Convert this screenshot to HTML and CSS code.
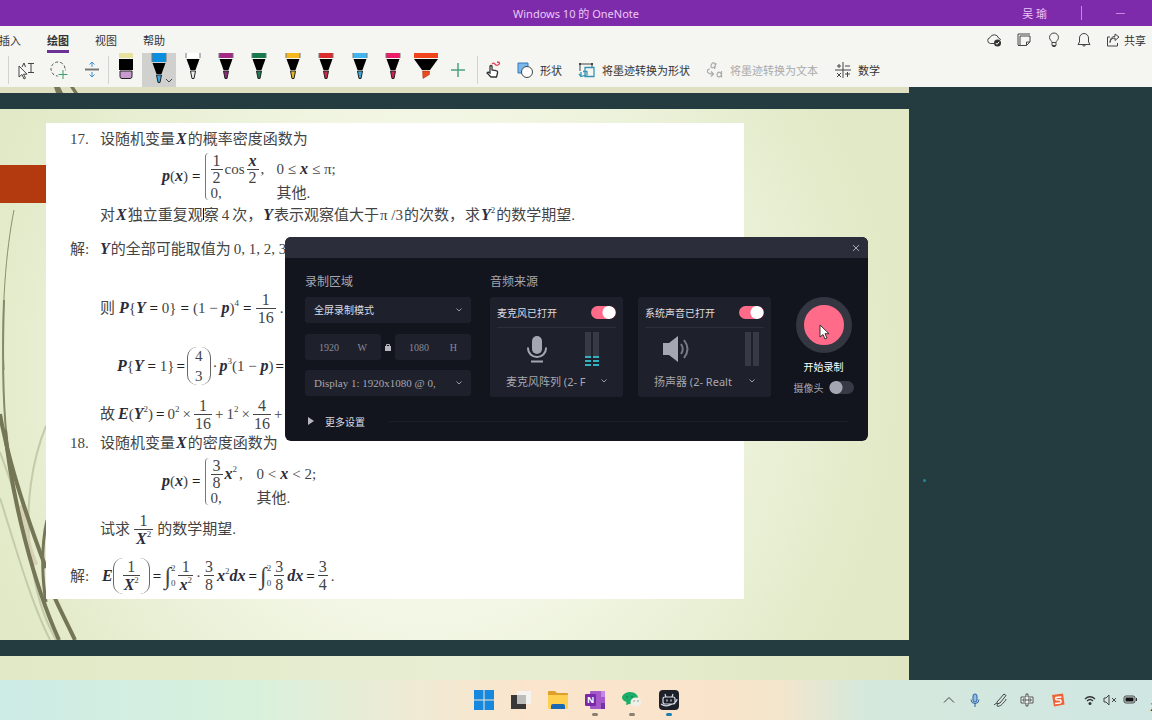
FILE: index.html
```html
<!DOCTYPE html>
<html lang="zh-CN">
<head>
  <meta charset="UTF-8" />
  <meta name="viewport" content="width=device-width, initial-scale=1.0"/>
  <title>Windows 10 的 OneNote</title>
  <link rel="stylesheet" href="styles.css">
</head>
<body>

  <!-- Title bar -->
  <header class="titlebar">
    <h1>Windows 10 的 OneNote</h1>
    <div class="titlebar-right">
      <span>吴 瑜</span>
      <i class="bar"></i>
      <button class="minimize" aria-label="最小化"></button>
    </div>
  </header>

  <!-- Ribbon -->
  <nav class="ribbon">
    <div class="tabs">
      <button>插入</button>
      <button class="active">绘图</button>
      <button>视图</button>
      <button>帮助</button>
      <div class="ribbon-right">
        <button aria-label="同步"><svg width="16" height="16" viewBox="0 0 16 16"><path d="M8 11.500H4.500a3 3 0 0 1-.5-5.900 4.500 4.500 0 0 1 8.500.4 2.500 2.500 0 0 1 2 2" class="line"/><circle cx="11.500" cy="11" r="3.500" fill="#333"/><path d="M9.800 11l1.200 1.300 2.200-2.500" fill="none" stroke="#fff"/></svg></button>
        <button aria-label="便笺"><svg width="16" height="16" viewBox="0 0 16 16"><path d="M2 13V2h12M4 4h10v6l-3.500 3.500H4zM14 10h-3.500v3.500M2 13.500h2" class="line"/></svg></button>
        <button aria-label="提示"><svg width="16" height="16" viewBox="0 0 16 16"><path d="M6 10.500C6 9 3.500 8 3.500 5.500a4.500 4.500 0 0 1 9 0C12.500 8 10 9 10 10.500zM6 10.500v3h4v-3M6.500 14.500h3" class="line"/></svg></button>
        <button aria-label="通知"><svg width="16" height="16" viewBox="0 0 16 16"><path d="M2 12.500h12L12.500 10V6a4.500 4.500 0 0 0-9 0v4zM6.500 13a1.600 1.600 0 0 0 3 0" class="line"/></svg></button>
        <button class="share"><svg width="14" height="14" viewBox="0 0 14 14"><path d="M4 4H1.500v9h10v-3M4 9.500c.5-3 2-4.500 5-4.500V7.500L13 4 9 1v2.300C6 3.500 4 5.500 4 9.500z" class="line"/></svg>共享</button>
      </div>
    </div>

    <div class="tools">
      <i class="sep"></i>
      <button class="tool" aria-label="选择"><svg width="20" height="20" viewBox="0 0 20 20"><path d="M3 6v11l3-2.500L8 19l1.500-.8-2-4H11z" fill="#fff" stroke="#444"/><path d="M6 7l2-4 1.500 4" class="line"/><path d="M12 3.500h6M12 12.500h6M15 3.500v9" class="line"/></svg></button>
      <button class="tool" aria-label="套索"><svg width="20" height="20" viewBox="0 0 20 20"><circle cx="9" cy="9" r="7" fill="none" stroke="#555" stroke-dasharray="3 2"/><path d="M14 9v11M8.500 14.500h11" stroke="#f5f5f2" stroke-width="4"/><path d="M14 10v9M9.500 14.500h9" stroke="#3a9d6b"/></svg></button>
      <button class="tool" aria-label="插入空间"><svg width="20" height="20" viewBox="0 0 20 20"><path d="M3 9.500h14" stroke="#777" stroke-width="2"/><path d="M10 7V2M7.500 4.500L10 2l2.500 2.500M10 12v5M7.500 14.500L10 17l2.500-2.500" fill="none" stroke="#3d8fd1"/></svg></button>
      <i class="sep"></i>
      <div class="pens" id="pens"></div>
      <button class="add" aria-label="添加笔"><svg width="16" height="16" viewBox="0 0 16 16"><path d="M8 1v14M1 8h14" stroke="#4ba37b" stroke-width="1.500"/></svg></button>
      <i class="sep"></i>
      <button class="tool touch" aria-label="触摸绘图"><svg width="18" height="18" viewBox="0 0 18 18"><path d="M6 12V5.500a1 1 0 0 1 2 0V9l4 .7q2 .4 1.500 2.300l-1 4H7L3 12q1-1.500 3 0z" fill="#fff" stroke="#333" stroke-width="1.300"/><path d="M8 3c3-3 3 3 6 1 3-2 1-3-1-3" fill="none" stroke="#e0435b" stroke-width="1.300"/></svg></button>
      <button class="labelled"><svg width="18" height="18" viewBox="0 0 18 18"><path d="M2 2h10v3L6 12H2z" fill="#79b8ea" stroke="#3479b8"/><circle cx="11" cy="11" r="5.500" fill="#fff" stroke="#444"/></svg>形状</button>
      <button class="labelled"><svg width="18" height="18" viewBox="0 0 18 18"><path d="M2 3h12M2 3v7M14 3v3" class="line"/><path d="M1 2h2v2H1zM13 2h2v2h-2z" fill="#444"/><path d="M7 6.500h9v9H7zM3 11v4M1 13l2 2.500L8 14M5 10.500h4v4" fill="none" stroke="#3594b5" stroke-width="1.300"/></svg>将墨迹转换为形状</button>
      <button class="labelled" disabled><svg width="18" height="18" viewBox="0 0 18 18"><path d="M10 2L8.500 8M9.500 4Q7-1 5 4.500 4.500 8.500 9 5.500M15.500 10v6.500M15.500 13.500Q13 9 11 13q0 5 4.500 1.500M4 8Q1 8 1.500 11q1 2 5.500 2M5 10.500L7.500 13 5 15.500" fill="none" stroke="#aaa" stroke-width="1.200"/></svg>将墨迹转换为文本</button>
      <button class="labelled"><svg width="18" height="18" viewBox="0 0 18 18"><path d="M9 1v16M1 9h16M5 3v4M3 5h4M11 5h5M3 12l4 4M7 12l-4 4M11 13h5M13.500 11v5" class="line"/></svg>数学</button>
    </div>
  </nav>

  <!-- Notebook page -->
  <main class="workspace">
    <div class="slides">
      <div class="slide slide-prev">
        <svg width="90" height="6" viewBox="0 0 90 6"><path d="M54 0h6l3 6h-7zM70 0h4l4 6h-4z" fill="#77775a"/></svg>
      </div>

      <article class="slide slide-main">
        <svg class="grass" width="110" height="531" viewBox="0 109 110 531">
          <g fill="none">
            <path d="M46 426C32 460 25 505 30 550S45 620 56 640M0 452C8 475 22 510 28 550M0 498C15 545 30 600 50 640" stroke="#c3cbaa" stroke-width="2"/>
            <path d="M22 505q4 40 14 60" stroke="#d6d0b4" stroke-width="5"/>
            <path d="M14 210C6 250 1 310 4 370" stroke="#8b8f6c" stroke-width="1"/>
            <path d="M4 300C2 360 3 430 12 475" stroke="#85886a" stroke-width="2"/>
            <path d="M5 430C12 500 34 585 59 640" stroke="#747655" stroke-width="4"/>
            <path d="M0 414C8 460 27 518 46 568M54 596C60 610 68 625 75 640" stroke="#747655" stroke-width="4"/>
            <path d="M47 520C40 550 43 585 46 602" stroke="#747655" stroke-width="3"/>
          </g>
        </svg>
        <div class="ribbon-mark"></div>

        <div class="paper">
          <p class="row row-title"><span class="no">17.</span>设随机变量<var>X</var>的概率密度函数为</p>
          <div class="row row-def">
            <span><var>p</var>(<var>x</var>)</span><b>=</b>
            <div class="cases">
              <div><span class="frac"><span>1</span><span>2</span></span>cos<span class="frac"><var>x</var><span>2</span></span>,</div>
              <div>0 ≤ <var>x</var> ≤ π;</div>
              <div>0,</div>
              <div>其他.</div>
            </div>
          </div>
          <p class="row row-line indent">对<var>X</var><span>独立重复观<i class="caret"></i>察</span><span class="num">4</span>次，<var>Y</var>表示观察值大于<span>π /3</span><span>的次数，</span>求<span><var>Y</var><sup>2</sup></span><span>的数学期望.</span></p>
          <p class="row row-line"><span class="no">解:</span><var>Y</var>的全部可能取值为<span class="num">0, 1, 2, 3, 4.</span><span class="hidden-part"><span>∫</span><span>|<sup>π</sup></span><span>∫</span></span></p>
          <p class="row row-p0 indent">则<span><var>P</var>{<var>Y</var> <b>=</b> 0}</span><b>=</b><span>(1 − <var>p</var>)<sup>4</sup></span><b>=</b><span class="frac"><span>1</span><span>16</span></span>.</p>
          <p class="row row-p1"><span><var>P</var>{<var>Y</var> <b>=</b> 1}</span><b>=</b><span class="round"><span>4</span><span>3</span></span>·<span><var>p</var><sup>3</sup>(1 − <var>p</var>)</span><b>=</b></p>
          <p class="row row-sum indent">故<span><var>E</var>(<var>Y</var><sup>2</sup>)</span><b>=</b><span>0<sup>2</sup></span>×<span class="frac"><span>1</span><span>16</span></span>+<span>1<sup>2</sup></span>×<span class="frac"><span>4</span><span>16</span></span>+</p>
          <p class="row row-second"><span class="no">18.</span>设随机变量<var>X</var>的密度函数为</p>
          <div class="row row-def">
            <span><var>p</var>(<var>x</var>)</span><b>=</b>
            <div class="cases narrow">
              <div><span class="frac"><span>3</span><span>8</span></span><span><var>x</var><sup>2</sup></span>,</div>
              <div>0 &lt; <var>x</var> &lt; 2;</div>
              <div>0,</div>
              <div>其他.</div>
            </div>
          </div>
          <p class="row row-ask indent">试求<span class="frac"><span>1</span><span><var>X</var><sup>2</sup></span></span>的数学期望.</p>
          <p class="row row-answer"><span class="no">解:</span><span class="group"><var>E</var><span class="round wide"><span class="frac"><span>1</span><span><var>X</var><sup>2</sup></span></span></span></span><b>=</b><span class="int">∫<span class="limits"><span>2</span><span>0</span></span></span><span class="frac"><span>1</span><span><var>x</var><sup>2</sup></span></span>·<span class="frac"><span>3</span><span>8</span></span><span><var>x</var><sup>2</sup><var>dx</var></span><b>=</b><span class="int">∫<span class="limits"><span>2</span><span>0</span></span></span><span class="frac"><span>3</span><span>8</span></span><var>dx</var><b>=</b><span class="frac"><span>3</span><span>4</span></span>.</p>
        </div>
      </article>

      <div class="slide slide-next"></div>
    </div>
    <div class="canvas"><i class="ink-dot"></i></div>
  </main>

  <!-- Screen recorder window -->
  <section class="recorder">
    <div class="recorder-head">
      <button aria-label="关闭"><svg width="8" height="8" viewBox="0 0 8 8"><path d="M1 1l6 6M7 1L1 7" stroke="#aaabb5" fill="none"/></svg></button>
    </div>
    <div class="recorder-body">
      <div class="area">
        <h2>录制区域</h2>
        <div class="field bright">
          <select aria-label="录制区域"><option>全屏录制模式</option></select>
          <svg class="chev" width="6" height="4" viewBox="0 0 6 4"><path d="M.5.5L3 3 5.500.5"/></svg>
        </div>
        <div class="size">
          <label class="field"><input type="text" value="1920">W</label>
          <svg width="6" height="8" viewBox="0 0 6 8"><path d="M0 3h6v5H0z" fill="#b5b6be"/><path d="M1.500 3V1.500h3V3" fill="none" stroke="#b5b6be"/></svg>
          <label class="field"><input type="text" value="1080">H</label>
        </div>
        <div class="field display">
          <select aria-label="显示器"><option>Display 1: 1920x1080 @ 0,</option></select>
          <svg class="chev" width="6" height="4" viewBox="0 0 6 4"><path d="M.5.5L3 3 5.500.5"/></svg>
        </div>
      </div>

      <div class="audio">
        <h2>音频来源</h2>
        <div class="cards">
          <div class="card">
            <label class="card-top">麦克风已打开<input type="checkbox" class="toggle" checked></label>
            <div class="card-mid">
              <svg width="22" height="28" viewBox="0 0 22 28"><rect x="6" y="1" width="10" height="18" rx="5" fill="#a4a6b2"/><path d="M2 12.500v1a9 8.500 0 0 0 18 0v-1M5 26.500h12" fill="none" stroke="#a4a6b2" stroke-width="2"/></svg>
              <div class="meter live"><i></i><i></i></div>
            </div>
            <div class="device">
              <select aria-label="麦克风"><option>麦克风阵列 (2- F</option></select>
              <svg class="chev" width="6" height="4" viewBox="0 0 6 4"><path d="M.5.5L3 3 5.500.5"/></svg>
            </div>
          </div>
          <div class="card">
            <label class="card-top">系统声音已打开<input type="checkbox" class="toggle" checked></label>
            <div class="card-mid">
              <svg width="28" height="28" viewBox="0 0 28 28"><path d="M1 8h6l9-7v26l-9-7H1z" fill="#a4a6b2"/><path d="M19 9q3.500 5 0 10M22 5q7 9 0 18" fill="none" stroke="#777985" stroke-width="2"/></svg>
              <div class="meter"><i></i><i></i></div>
            </div>
            <div class="device">
              <select aria-label="扬声器"><option>扬声器 (2- Realt</option></select>
              <svg class="chev" width="6" height="4" viewBox="0 0 6 4"><path d="M.5.5L3 3 5.500.5"/></svg>
            </div>
          </div>
        </div>
      </div>

      <div class="start">
        <button class="record" aria-label="开始录制">
          <svg class="pointer" width="11" height="16" viewBox="0 0 11 16"><path d="M1 1v12l3-2.500L6 15l2-1-2-4.300h4z" fill="#fff" stroke="#333"/></svg>
        </button>
        <strong>开始录制</strong>
        <label>摄像头<input type="checkbox" class="toggle"></label>
      </div>
    </div>
    <details class="more">
      <summary>更多设置</summary>
    </details>
  </section>

  <!-- Taskbar -->
  <footer class="taskbar">
    <div class="apps">
      <button aria-label="开始"><svg width="20" height="20" viewBox="0 0 20 20"><path d="M0 0h9.500v9.500H0zM10.500 0H20v9.500h-9.500zM0 10.500h9.500V20H0zM10.500 10.500H20V20h-9.500z" fill="#1689df"/></svg></button>
      <button aria-label="任务视图"><svg width="20" height="20" viewBox="0 0 20 20"><path d="M6 1h14v13H6z" fill="#f5f3f0"/><path d="M0 5h15v14H0z" fill="#383838"/><path d="M6 5h9v9H6z" fill="#bdbdbb"/></svg></button>
      <button aria-label="文件资源管理器"><svg width="20" height="20" viewBox="0 0 20 20"><path d="M0 2q0-1 1-1h6l2 2h10q1 0 1 1v14H0z" fill="#dfa02b"/><path d="M0 5h20v13q0 1-1 1H1q-1 0-1-1z" fill="#ffd04f"/><path d="M3 19v-3q0-2 2-2h10q2 0 2 2v3z" fill="#1769b5"/></svg></button>
      <button class="open" aria-label="OneNote"><svg width="20" height="20" viewBox="0 0 20 20"><rect x="5" y="1" width="15" height="18" rx="1" fill="#a558c9"/><path d="M16 1h4v6h-4z" fill="#c785e4"/><path d="M16 13h4v6h-4z" fill="#7733a1"/><rect x="0" y="4" width="11" height="12" rx="1" fill="#7a2aa8"/><text x="2" y="13" font-size="9" font-weight="bold" fill="#fff">N</text></svg></button>
      <button class="open" aria-label="微信"><svg width="20" height="20" viewBox="0 0 20 20"><path d="M8 2c5 0 8 3 8 6s-3 5.500-7 5.500L4 15l.5-3C2 11 0 9.500 0 7.500 0 4.500 4 2 8 2z" fill="#1cae68"/><ellipse cx="14" cy="12" rx="5.500" ry="4.500" fill="#f2efe7"/><path d="M12 10v2M16 10v2" stroke="#8aa394"/><path d="M5 6v1.500M10 6v1.500" stroke="#126d42"/></svg></button>
      <button class="open current" aria-label="录屏"><svg width="20" height="20" viewBox="0 0 20 20"><rect width="20" height="20" rx="4" fill="#1d2029"/><path d="M6 7h8q2 0 2 2v3q0 2-2 2H6q-2 0-2-2V9q0-2 2-2zM7 7L6 4M13 7l1-3M2 14q4 3 9 1 7-2 7-6M8 9.500v2M12 9.500v2" fill="none" stroke="#d5dae2" stroke-width="1.200"/></svg></button>
    </div>
    <div class="tray">
      <button aria-label="显示隐藏的图标"><svg width="14" height="14" viewBox="0 0 14 14"><path d="M2 9.500l5-5 5 5" class="line"/></svg></button>
      <button aria-label="麦克风"><svg width="14" height="14" viewBox="0 0 14 14"><rect x="5" y="1" width="4" height="8" rx="2" fill="#8fc0e8" stroke="#2a5fa5"/><path d="M3 6.500q0 4 4 4t4-4M7 10.500V14" fill="none" stroke="#2a5fa5"/></svg></button>
      <button aria-label="笔"><svg width="14" height="14" viewBox="0 0 14 14"><path d="M3 9L10 1l2 1.500L6 10l-3 1zM0 12c3-3 4-1 3 1 2 1 5-1 6-3 1-1 3-2 3-4" class="line"/></svg></button>
      <button aria-label="输入法"><svg width="14" height="14" viewBox="0 0 14 14"><path d="M6 1h2v3h5v6H8v3H6v-3H1V4h5zM3 6v2h3V6zM8 6v2h3V6z" fill="#eef5f2" stroke="#555"/></svg></button>
      <button class="sogou" aria-label="搜狗"><svg width="14" height="14" viewBox="0 0 14 14"><path d="M1 2l11-1.500 1.500 11L3 13.500z" fill="#ed6336"/><path d="M10.500 4L5 4.500Q4 6 5.500 6.700L9.500 7q1.500 2-.5 3l-5 .5" fill="none" stroke="#fff" stroke-width="1.500"/></svg></button>
      <button aria-label="网络"><svg width="14" height="14" viewBox="0 0 14 14"><path d="M2 6q5-4.500 10 0M4 8q3-3 6 0" fill="none" stroke="#333" stroke-width="1.300"/><circle cx="7" cy="10.500" r="1.500" fill="#333"/></svg></button>
      <button aria-label="音量"><svg width="14" height="14" viewBox="0 0 14 14"><path d="M1 5h2l3-3v10L3 9H1zM9 5l4 4M13 5L9 9" class="line"/></svg></button>
      <button aria-label="电池"><svg width="14" height="14" viewBox="0 0 14 14"><rect x="1" y="3" width="11" height="7" rx="2" class="line"/><path d="M2.500 4.500h8v4h-8z" fill="#111"/><path d="M13.500 5v3" stroke="#333"/></svg></button>
    </div>
    <span class="clock">2</span>
  </footer>

  <script>
    const penColors = [
      ['#0a8ede', '#38a9e0'], ['#fff', '#eee'], ['#a32a86', '#8b2a78'],
      ['#187a4c', '#1c7a50'], ['#f3b81c', '#e5b52d'], ['#dc2b2e', '#c9274a'],
      ['#42b4ef', '#3aa9dd'], ['#ec1c68', '#c92550']
    ];

    // the selected pen sits a little further out of the tray
    function penIcon(cap, tip, on) {
      const d = on ? 4 : 0;
      return `<svg width="20" height="34" viewBox="0 0 20 34">
        <path d="M3 0h14v${5 + d}H3z" fill="${cap}"/><path d="M3 0v${5 + d}M17 0v${5 + d}" stroke="#777"/>
        <g transform="translate(0 ${d})"><path d="M3.500 6h13L12.500 17h-5z" fill="#000"/>
        <path d="M7.500 18h5L11 25.500H9z" fill="${tip}" stroke="#222"/></g></svg>`;
    }

    const eraser = `<svg width="20" height="34" viewBox="0 0 20 34">
      <path d="M3 0h14v5H3z" fill="#e8e2a0"/><path d="M3 6h14v11H3z" fill="#000"/>
      <path d="M4 18h12v5.500q0 2-2 2H6q-2 0-2-2z" fill="#c79bd0" stroke="#222"/></svg>`;

    const marker = `<svg width="26" height="34" viewBox="0 0 26 34">
      <path d="M1 0h24v5H1z" fill="#f2441a"/><path d="M1 6h24l-8 11H9z" fill="#000"/>
      <path d="M9.500 18h7v3.500L10 25.500z" fill="#e8491f" stroke="#a33210" stroke-width=".5"/></svg>`;

    let html = `<button aria-label="橡皮擦">${eraser}</button>`;
    penColors.forEach(([cap, tip], i) => {
      const on = i === 0;
      html += `<button aria-label="笔 ${i + 1}"${on ? ' class="selected"' : ''}>${penIcon(cap, tip, on)}${on ? '<svg class="drop" width="8" height="6" viewBox="0 0 8 6"><path d="M1 1l3 3 3-3" class="line"/></svg>' : ''}</button>`;
    });
    html += `<button aria-label="荧光笔">${marker}</button>`;
    document.getElementById('pens').innerHTML = html;
  </script>
</body>
</html>
```
FILE: styles.css
```css
* {
  box-sizing: border-box;
}

body {
  margin: 0;
  height: 100vh;
  display: flex;
  flex-direction: column;
  overflow: hidden;
  font-family: "Noto Sans", "Noto Sans CJK SC", sans-serif;
  font-size: 11px;
  color: #333;
}

button {
  font: inherit;
  color: inherit;
  background: none;
  border: none;
  padding: 0;
  cursor: pointer;
}

svg {
  display: block;
  flex: none;
}

h1, h2, p {
  margin: 0;
  font-weight: normal;
}

.line {
  fill: none;
  stroke: #444;
}

/* Title bar */
.titlebar {
  flex: none;
  height: 26px;
  display: grid;
  grid-template-columns: 1fr auto 1fr;
  align-items: center;
  background: #7e2bab;
  color: #ecc8f8;
}

.titlebar h1 {
  grid-column: 2;
  font-size: 11px;
}

.titlebar-right {
  display: flex;
  justify-content: flex-end;
  align-items: center;
  gap: 34px;
  padding-right: 27px;
}

.bar {
  width: 1px;
  height: 14px;
  background: #c58ae0;
}

.minimize {
  width: 9px;
  height: 1px;
  background: #c58ae0;
}

/* Ribbon */
.ribbon {
  flex: none;
  background: #f5f5f2;
}

.tabs {
  display: flex;
  align-items: center;
  gap: 26px;
  height: 27px;
  margin-left: -1px;
}

.tabs > button {
  height: 27px;
  padding-top: 3px;
  border-bottom: 3px solid transparent;
}

.tabs .active {
  font-weight: bold;
  border-color: #6b3296;
}

.ribbon-right {
  display: flex;
  align-items: center;
  gap: 14px;
  margin-left: auto;
  padding-right: 6px;
}

.share {
  display: flex;
  align-items: center;
  gap: 4px;
}

.tools {
  display: flex;
  align-items: center;
  height: 34px;
  padding-left: 8px;
}

.sep {
  width: 1px;
  height: 28px;
  background: #d2d2d0;
}

.tool {
  display: flex;
  justify-content: center;
  width: 33px;
}

.pens {
  display: flex;
  width: 334px;
  height: 34px;
}

.pens button {
  position: relative;
  flex: 1;
  display: flex;
  justify-content: center;
}

.pens .selected {
  background: #d0d0ce;
}

.drop {
  position: absolute;
  right: 3px;
  bottom: 3px;
}

.add {
  display: flex;
  padding: 0 11px 0 7px;
}

.touch {
  width: 30px;
}

.labelled {
  display: flex;
  align-items: center;
  gap: 6px;
  margin-left: 8px;
  margin-right: 8px;
}

.labelled:disabled {
  color: #aaa;
}

/* Notebook page */
.workspace {
  flex: 1;
  min-height: 0;
  display: flex;
  background: #243b3f;
}

.slides {
  flex: 1;
  display: flex;
  flex-direction: column;
  gap: 16px;
}

.canvas {
  width: 243px;
  padding: 392px 0 0 14px;
}

.ink-dot {
  display: block;
  width: 3px;
  height: 3px;
  border-radius: 50%;
  background: #1a8b9c;
}

.slide {
  background: #e1e9c6;
}

.slide-prev {
  height: 6px;
  background: #dfe0c2;
}

.slide-main {
  position: relative;
  padding: 14px 165px 41px 46px;
  background: radial-gradient(ellipse 52% 95% at 47% 50%, #fafcf4, #f2f6e4 50%, #e1e9c6);
}

.slide-next {
  flex: 1;
  background: linear-gradient(90deg, #e1e9c6, #e8eed3 50%, #dfe6c2);
}

.grass {
  position: absolute;
  left: 0;
  top: 0;
}

.ribbon-mark {
  position: absolute;
  left: 0;
  top: 56px;
  width: 46px;
  height: 38px;
  background: #b23a0e;
}

/* Exercise sheet */
.paper {
  position: relative;
  padding-left: 24px;
  background: #fff;
  font-family: "Liberation Serif", "Noto Sans CJK SC", serif;
  font-size: 15px;
  line-height: 18px;
  color: #444;
  white-space: nowrap;
}

.row {
  display: flex;
  align-items: center;
  gap: 1px;
}

.row var {
  font-size: 16px;
  font-weight: bold;
  color: #2b2b3a;
}

.row b {
  color: #222;
}

.no {
  width: 29px;
}

.indent {
  padding-left: 30px;
}

.num {
  padding: 0 2px;
}

.row-title { height: 31px; }
.row-def { height: 44px; padding-left: 92px; gap: 4px; }
.row-line { height: 34px; }
.row-p0 { height: 52px; margin-top: 16px; gap: 4px; }
.row-p1 { height: 64px; padding-left: 47px; gap: 2px; }
.row-sum { height: 32px; gap: 3px; }
.row-second { height: 26px; }
.row-second + .row-def { height: 50px; }
.row-ask { height: 46px; gap: 4px; }
.row-answer { height: 47px; gap: 3px; }

sup {
  font-size: 9px;
  line-height: 0;
  vertical-align: 7px;
}

.frac {
  display: inline-flex;
  flex-direction: column;
  text-align: center;
  font-size: 16px;
  line-height: 17px;
}

.frac > :first-child {
  border-bottom: 1px solid #444;
}

.frac > * {
  padding: 0 2px;
}

.row-sum .frac > *,
.row-answer .frac > * {
  padding: 0 1px;
}

.cases {
  display: grid;
  grid-template-columns: 66px auto;
  align-items: center;
  padding-left: 5px;
  border-left: 1px solid #777;
  border-radius: 4px 0 0 4px;
  line-height: 14px;
}

.cases > div {
  display: flex;
  align-items: center;
  gap: 2px;
}

.cases > div:nth-child(even) {
  gap: 4px;
}

.cases .frac {
  line-height: 16px;
}

.cases.narrow {
  grid-template-columns: 46px auto;
}

.group {
  display: flex;
  align-items: center;
}

.round {
  display: inline-flex;
  flex-direction: column;
  justify-content: space-between;
  height: 38px;
  padding: 0 7px;
  border: 1px solid #666;
  border-width: 0 1px;
  border-radius: 10px;
}

.round.wide {
  height: 36px;
  padding: 0 9px;
}

.int {
  display: inline-flex;
  align-items: center;
  font-size: 24px;
}

.limits {
  display: flex;
  flex-direction: column;
  justify-content: space-between;
  height: 24px;
  font-size: 9px;
  line-height: 9px;
}

.caret {
  display: inline-block;
  width: 1px;
  height: 12px;
  background: #111;
}

.hidden-part {
  display: flex;
  gap: 102px;
  padding-left: 132px;
  font-size: 32px;
}

/* Screen recorder */
.recorder {
  position: absolute;
  left: 285px;
  top: 237px;
  width: 583px;
  border-radius: 6px;
  overflow: hidden;
  background: #12141e;
  color: #a6a7b0;
}

.recorder-head {
  display: flex;
  justify-content: flex-end;
  align-items: center;
  height: 21px;
  padding-right: 8px;
  background: #2c2d3a;
}

.recorder-body {
  display: flex;
  padding: 16px 12px 0 20px;
}

.recorder h2 {
  height: 23px;
  font-size: 12px;
  line-height: 16px;
}

.area {
  width: 166px;
}

.field {
  display: flex;
  align-items: center;
  height: 26px;
  padding: 0 9px;
  border-radius: 3px;
  background: #1e202c;
}

.recorder select,
.recorder input[type="text"] {
  flex: 1;
  min-width: 0;
  padding: 0;
  border: none;
  outline: none;
  appearance: none;
  background: none;
  color: inherit;
  font: inherit;
}

.chev {
  fill: none;
  stroke: #9a9ba5;
}

.bright {
  color: #dcdce2;
  font-size: 10px;
}

.size {
  display: flex;
  align-items: center;
  justify-content: space-between;
  margin: 11px 0 10px;
  font-family: "Liberation Serif", serif;
  font-size: 10px;
}

.size .field {
  width: 76px;
  padding: 0 14px;
  color: #8a8b95;
}

.display {
  font-family: "Liberation Serif", serif;
  font-size: 11px;
}

.audio {
  margin-left: 19px;
}

.cards {
  display: flex;
  gap: 15px;
}

.card {
  width: 133px;
  height: 100px;
  padding: 0 7px;
  border-radius: 3px;
  background: #1e202c;
}

.card-top {
  display: flex;
  justify-content: space-between;
  align-items: center;
  height: 31px;
  font-size: 10px;
  color: #dcdce2;
  border-bottom: 1px solid #2c2e3a;
}

.toggle {
  appearance: none;
  width: 25px;
  height: 13px;
  margin: 0;
  border-radius: 7px;
  background: radial-gradient(circle at 7px 50%, #a4a6b2 6px, transparent 7px) #373945;
}

.toggle:checked {
  background: radial-gradient(circle at 18px 50%, #fff 6px, transparent 7px) #ff6b88;
}

.card-mid {
  display: flex;
  justify-content: space-between;
  align-items: center;
  height: 42px;
  padding: 0 17px 0 29px;
}

.card + .card .card-mid {
  padding: 0 5px 0 17px;
}

.meter {
  display: flex;
  gap: 2px;
}

.meter i {
  width: 6px;
  height: 34px;
  background: #373945;
}

.live i {
  background: repeating-linear-gradient(0deg, #2fb3c0 0 2px, #1e202c 2px 4px) bottom / 100% 10px no-repeat #373945;
}

.device {
  display: flex;
  align-items: center;
  justify-content: space-between;
  height: 22px;
  padding: 0 9px;
}

.recorder .device select {
  flex: none;
  width: 84px;
}

.start {
  flex: 1;
  display: flex;
  flex-direction: column;
  align-items: center;
  padding: 23px 0 0 20px;
}

.record {
  position: relative;
  width: 56px;
  height: 56px;
  border: 8px solid #343642;
  border-radius: 50%;
  background: #ff6b88;
}

.pointer {
  position: absolute;
  left: 15px;
  top: 19px;
}

.start strong {
  margin-top: 6px;
  font-size: 10px;
  line-height: 16px;
  font-weight: normal;
  color: #fff;
}

.start label {
  display: flex;
  align-items: center;
  gap: 5px;
  height: 24px;
  font-size: 10px;
}

.more {
  padding: 13px 20px 11px 23px;
}

.more summary {
  display: flex;
  align-items: center;
  height: 18px;
  color: #dcdce2;
  font-size: 10px;
}

.more summary::before {
  content: "";
  border-left: 6px solid #b5b6be;
  border-top: 4px solid transparent;
  border-bottom: 4px solid transparent;
  margin-right: 11px;
}

.more summary::after {
  content: "";
  flex: 1;
  height: 1px;
  margin-left: 24px;
  background: #1c1e29;
}

/* Taskbar */
.taskbar {
  flex: none;
  position: relative;
  display: grid;
  grid-template-columns: 1fr auto 1fr;
  align-items: center;
  height: 40px;
  background: linear-gradient(90deg, #cdebe6, #d8f1dc 22%, #f0ead4 36%, #fbe5cc 46%, #f9e3ca 62%, #f2e6cc 68%, #d5e8dc 75%, #cfe6e2);
}

.apps {
  grid-column: 2;
  display: flex;
  gap: 17px;
}

.apps button {
  position: relative;
}

.open::after {
  content: "";
  position: absolute;
  left: 7px;
  bottom: -6px;
  width: 6px;
  height: 3px;
  border-radius: 2px;
  background: #8a8070;
}

.current::after {
  background: #1d7fae;
}

.tray {
  display: flex;
  justify-content: flex-end;
  gap: 6px;
  padding-right: 15px;
}

.tray button:nth-child(-n+4) {
  margin-right: 6px;
}

.tray .sogou {
  margin-left: 5px;
  margin-right: 12px;
}

.clock {
  position: absolute;
  right: -4px;
  bottom: 6px;
  font-size: 10px;
}
```
